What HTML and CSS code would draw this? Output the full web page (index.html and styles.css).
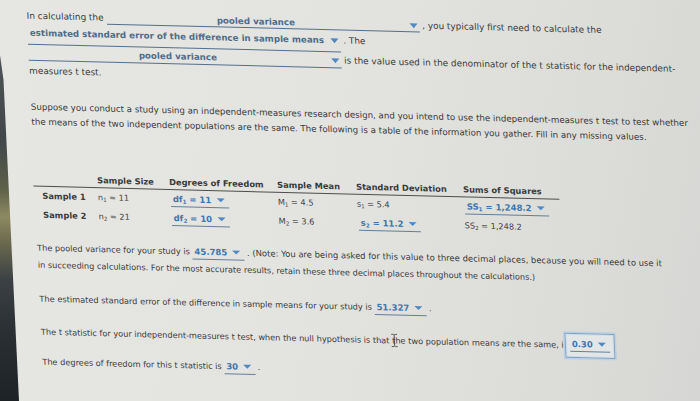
FILE: index.html
```html
<!DOCTYPE html>
<html lang="en">
<head>
<meta charset="utf-8">
<title>Independent-measures t test</title>
<link rel="stylesheet" href="styles.css">
</head>
<body>
<div class="edge"></div>
<main class="page">
  <div class="intro">
    <div class="iline l1">In calculating the <span class="pick"><span class="pick-text">pooled variance</span><span class="caret"></span></span> , you typically first need to calculate the</div>
    <div class="iline l2"><span class="pick pick-tall"><span class="pick-text">estimated standard error of the difference in sample means</span><span class="caret"></span></span> . The</div>
    <div class="iline l3"><span class="pick pick-mid"><span class="pick-text">pooled variance</span><span class="caret"></span></span> is the value used in the denominator of the t statistic for the independent-</div>
    <div class="iline l4">measures t test.</div>
  </div>

  <p class="para">Suppose you conduct a study using an independent-measures research design, and you intend to use the independent-measures t test to test whether<br>the means of the two independent populations are the same. The following is a table of the information you gather. Fill in any missing values.</p>

  <div class="table">
    <div class="trow thead">
      <div></div>
      <div>Sample Size</div>
      <div>Degrees of Freedom</div>
      <div>Sample Mean</div>
      <div>Standard Deviation</div>
      <div>Sums of Squares</div>
    </div>
    <div class="trow">
      <div class="label">Sample 1</div>
      <div>n<sub>1</sub> = 11</div>
      <div><span class="ans">df<sub>1</sub> = 11<span class="caret sm"></span></span></div>
      <div>M<sub>1</sub> = 4.5</div>
      <div>s<sub>1</sub> = 5.4</div>
      <div><span class="ans">SS<sub>1</sub> = 1,248.2<span class="caret sm"></span></span></div>
    </div>
    <div class="trow">
      <div class="label">Sample 2</div>
      <div>n<sub>2</sub> = 21</div>
      <div><span class="ans">df<sub>2</sub> = 10<span class="caret sm"></span></span></div>
      <div>M<sub>2</sub> = 3.6</div>
      <div><span class="ans">s<sub>2</sub> = 11.2<span class="caret sm"></span></span></div>
      <div>SS<sub>2</sub> = 1,248.2</div>
    </div>
  </div>

  <p class="pooled">The pooled variance for your study is <span class="ans">45.785<span class="caret sm"></span></span> <span class="note">. (Note: You are being asked for this value to three decimal places, because you will need to use it</span><br>in succeeding calculations. For the most accurate results, retain these three decimal places throughout the calculations.)</p>

  <p class="line est">The estimated standard error of the difference in sample means for your study is <span class="ans">51.327<span class="caret sm"></span></span> .</p>

  <p class="line tstat">The t statistic for your independent-measures t test, when the null hypothesis is that <span class="cur">t<svg class="ibeam" width="7" height="14" viewBox="0 0 7 14"><path d="M0.5 0.8h2.2l0.8 0.8 0.8-0.8h2.2M3.5 1.6v10.8M0.5 13.2h2.2l0.8-0.8 0.8 0.8h2.2" fill="none" stroke="#454545" stroke-width="0.9"/></svg></span>he two population means are the same, is<span class="focus"><span class="ans">0.30<span class="caret sm"></span></span></span></p>

  <p class="line dof">The degrees of freedom for this t statistic is <span class="ans">30<span class="caret sm"></span></span> .</p>
</main>
</body>
</html>
```

FILE: styles.css
```css
html, body {
  margin: 0;
  height: 100%;
}

body {
  overflow: hidden;
  background: linear-gradient(100deg, #e6e6e3 0%, #e3e3e0 45%, #dcdcd9 80%, #d6d7d4 100%);
  font-family: "DejaVu Sans", Verdana, sans-serif;
  color: #3b3b3b;
}

.edge {
  position: absolute;
  left: 0;
  top: 0;
  width: 22px;
  height: 401px;
  z-index: 2;
  clip-path: polygon(0 55px, 3.5px 80px, 19px 401px, 0 401px);
  background: linear-gradient(to bottom, #565b5e 0%, #41474a 35%, #5d6048 47%, #8d8963 54%, #6d6c4f 60%, #3a4044 70%, #2a3034 82%, #1d2225 100%);
}

.page {
  width: 700px;
  box-sizing: border-box;
  padding: 6px 0 0 26px;
  font-size: 8.2px;
  transform: skew(2.58deg, 1.43deg);
  transform-origin: 0 0;
}

p {
  margin: 0;
  white-space: nowrap;
}

/* opening sentence with the three wide drop-downs */
.intro {
  font-size: 8.9px;
}

.iline {
  white-space: nowrap;
  line-height: 18px;
}

.l1 { height: 17px; }
.l2 { height: 20px; }
.l3 { height: 18px; }
.l4 { height: 18px; }

.pick {
  display: inline-flex;
  align-items: baseline;
  width: 313px;
  font-size: 8.7px;
  line-height: 12px;
  padding-bottom: 0;
  border-bottom: 1.5px solid #52708c;
  vertical-align: baseline;
  font-weight: bold;
  color: #4f6d8b;
}

.pick-mid {
  padding-bottom: 1px;
}

.pick-tall {
  padding-bottom: 4.5px;
}

.pick-text {
  flex: 1;
  text-align: center;
}

.caret {
  display: inline-block;
  width: 0;
  height: 0;
  border-left: 4.5px solid transparent;
  border-right: 4.5px solid transparent;
  border-top: 5px solid #5089c2;
  align-self: center;
  margin: 0 2px 0 4px;
}

.caret.sm {
  border-left-width: 4px;
  border-right-width: 4px;
  border-top-width: 4.5px;
  vertical-align: 1px;
  margin: 0 2px 0 5px;
}

/* answered drop-downs */
.ans {
  display: inline-block;
  font-size: 8.5px;
  line-height: 11px;
  padding: 0 2px 1px;
  border-bottom: 1.5px solid #647f99;
  font-weight: bold;
  color: #3f76ad;
}

sub {
  font-size: 5.5px;
  vertical-align: -1.5px;
  line-height: 0;
}

.para {
  margin-top: 20.2px;
  font-size: 8.67px;
  line-height: 14.5px;
}

/* data table */
.table {
  margin-top: 43.5px;
  margin-left: -1px;
  width: 526px;
}

.trow {
  display: grid;
  grid-template-columns: 64px 72px 108px 79px 107px 96px;
  line-height: 19.5px;
  color: #444;
}

.thead {
  line-height: 13px;
  font-size: 8.3px;
  font-weight: bold;
  color: #3a3a3a;
  border-bottom: 1px solid #4d4d4d;
}

.label {
  padding-left: 8.5px;
  font-weight: bold;
  color: #3a3a3a;
  font-size: 8.3px;
}

.trow .ans {
  margin-left: 1px;
}

.pooled {
  margin-top: 14.2px;
  font-size: 8.2px;
  line-height: 17.5px;
}

.note {
  font-size: 8.45px;
}

.line {
  line-height: 17px;
}

.est {
  margin-top: 16.5px;
}

.tstat {
  margin-top: 15.2px;
}

.dof {
  margin-top: 13.7px;
}

.cur {
  position: relative;
}

.ibeam {
  position: absolute;
  left: -1px;
  top: -2px;
}

.focus {
  display: inline-block;
  vertical-align: middle;
  margin: -6px 0 -6px -3px;
  padding: 5px 4px 5px 4px;
  border: 1px solid #7ca3c8;
  box-shadow: 0 0 0 1.5px #bcd1e3, inset 0 0 0 1px #cddbe7;
  background: #e3e6e6;
  line-height: 11px;
}
```
